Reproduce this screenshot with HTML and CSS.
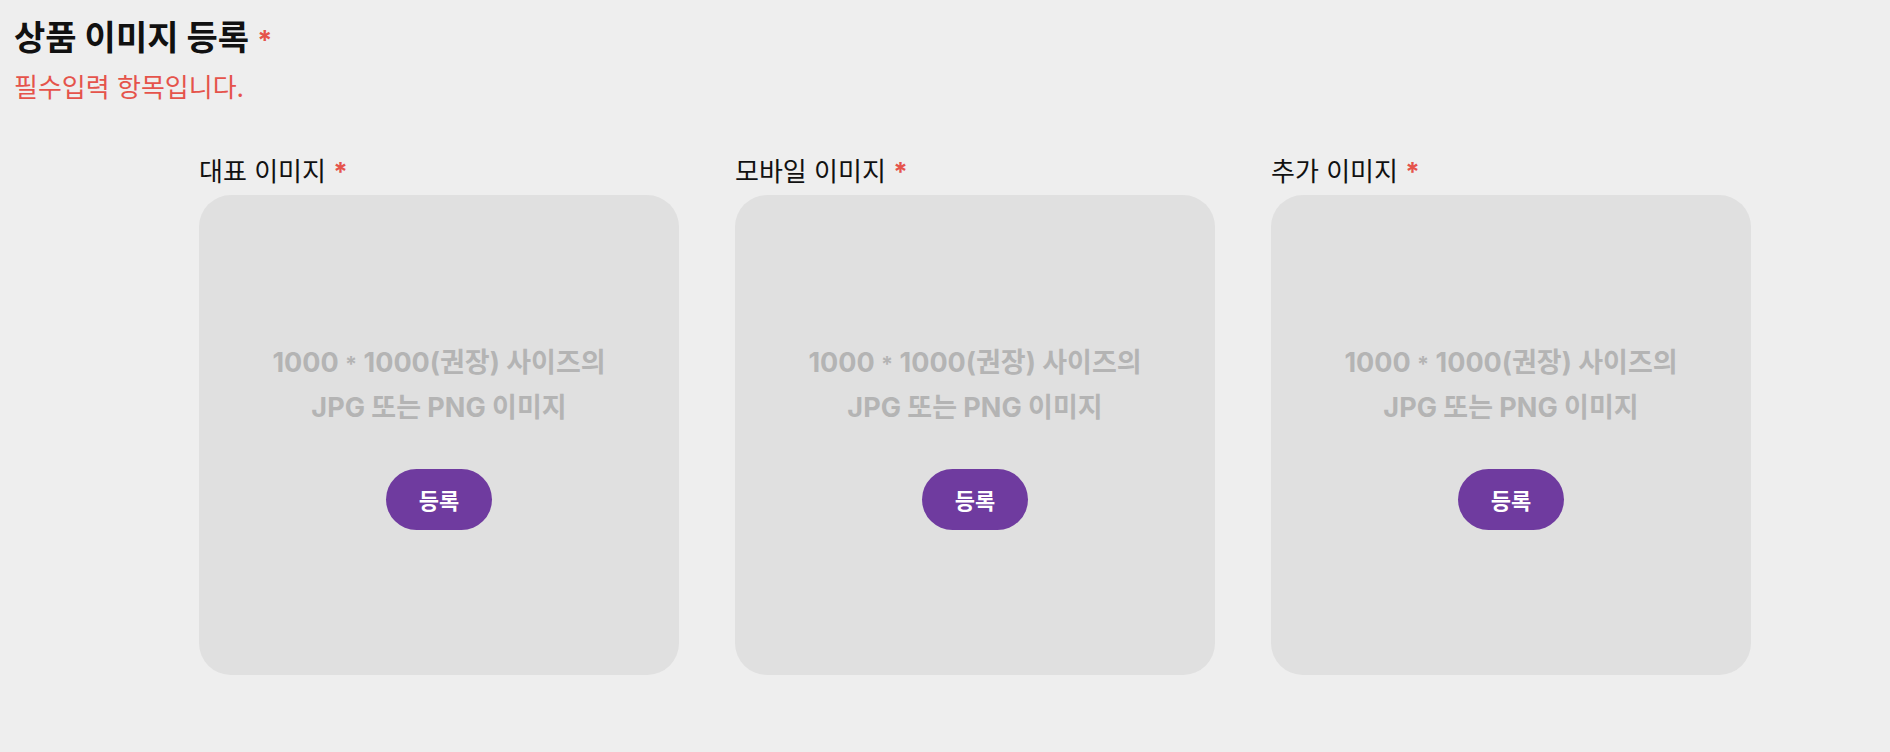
FILE: index.html
```html
<!DOCTYPE html>
<html lang="ko">
<head>
  <meta charset="UTF-8">
  <title>상품 이미지 등록</title>
  <meta name="viewport" content="width=device-width, initial-scale=1.0">
  <link rel="stylesheet" href="styles.css">
</head>
<body>

  <section class="image-section">
    <h2 class="section-title">상품 이미지 등록 <span class="req">*</span></h2>
    <p class="error-msg">필수입력 항목입니다.</p>

    <div class="upload-list">
      <div class="upload-field">
        <label class="field-label">대표 이미지 <span class="req">*</span></label>
        <div class="dropzone">
          <p class="guide">1000 <span class="times">*</span> 1000(권장) 사이즈의<br>JPG 또는 PNG 이미지</p>
          <button class="btn-upload">등록</button>
        </div>
      </div>

      <div class="upload-field">
        <label class="field-label">모바일 이미지 <span class="req">*</span></label>
        <div class="dropzone">
          <p class="guide">1000 <span class="times">*</span> 1000(권장) 사이즈의<br>JPG 또는 PNG 이미지</p>
          <button class="btn-upload">등록</button>
        </div>
      </div>

      <div class="upload-field">
        <label class="field-label">추가 이미지 <span class="req">*</span></label>
        <div class="dropzone">
          <p class="guide">1000 <span class="times">*</span> 1000(권장) 사이즈의<br>JPG 또는 PNG 이미지</p>
          <button class="btn-upload">등록</button>
        </div>
      </div>
    </div>
  </section>

</body>
</html>
```

FILE: styles.css
```css
html, body {
  margin: 0;
  padding: 0;
  background: #eeeeee;
  font-family: 'Inter', 'Noto Sans CJK KR', sans-serif;
  color: #111;
}

.image-section {
  padding: 14px 0 0 14px;
}

.section-title {
  margin: 0;
  font-size: 34px;
  font-weight: 700;
  line-height: 48px;
  color: #111;
}

.section-title .req {
  font-size: 27px;
}

.req {
  color: #e5534b;
}

.error-msg {
  margin: 8px 0 0;
  font-size: 26px;
  line-height: 30px;
  color: #e5534b;
}

.upload-list {
  display: flex;
  gap: 56px;
  margin: 52px 0 0 185px;
}

.upload-field {
  display: flex;
  flex-direction: column;
}

.field-label {
  font-size: 26px;
  line-height: 34px;
  color: #111;
  margin-bottom: 6px;
}

.field-label .req {
  font-weight: 700;
}

.dropzone {
  width: 480px;
  height: 480px;
  border-radius: 32px;
  background: #e0e0e0;
  display: flex;
  flex-direction: column;
  align-items: center;
  justify-content: center;
}

.guide {
  margin: 0;
  text-align: center;
  font-size: 27px;
  font-weight: 700;
  line-height: 43px;
  color: #b4b4b4;
}

.guide .times {
  font-size: 0.8em;
}

.btn-upload {
  margin-top: 40px;
  width: 106px;
  height: 61px;
  border: none;
  border-radius: 31px;
  background: #6f3b9f;
  color: #fff;
  font-family: inherit;
  font-size: 22px;
  font-weight: 700;
  cursor: pointer;
}
```
